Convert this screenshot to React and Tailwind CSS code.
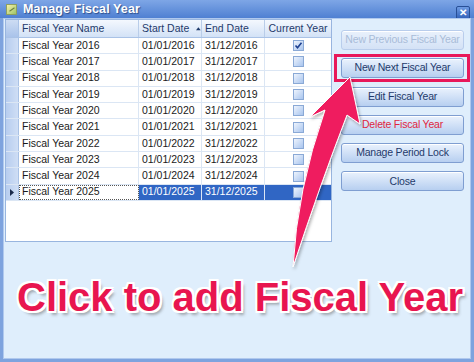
import React from "react";

const rows = [2016, 2017, 2018, 2019, 2020, 2021, 2022, 2023, 2024, 2025];

function Check({ checked }) {
  return (
    <div className="w-[11px] h-[11px] border border-[#8aa9d6] bg-gradient-to-br from-[#eef4fd] to-[#a9c5ee] flex items-center justify-center">
      {checked && (
        <svg width="9" height="9" viewBox="0 0 9 9">
          <path d="M1.5 4.5 L3.5 6.8 L7.5 1.8" stroke="#1d3f8f" strokeWidth="1.6" fill="none" />
        </svg>
      )}
    </div>
  );
}

function Btn({ children, variant }) {
  const txt =
    variant === "disabled"
      ? "text-[#a9bcd8]"
      : variant === "red"
      ? "text-[#e0263e]"
      : "text-[#1f3a6b]";
  const bg =
    variant === "disabled"
      ? "from-[#e9f1fc] to-[#d4e2f6] border-[#b9cdec]"
      : "from-[#eaf2fd] to-[#b7cff0] border-[#7f9ed1]";
  return (
    <div
      className={`h-[20px] w-[123px] rounded-[3px] border bg-gradient-to-b ${bg} ${txt} flex items-center justify-center text-[10.5px] whitespace-nowrap tracking-[-0.2px] shadow-[inset_0_1px_0_#fff]`}
    >
      {children}
    </div>
  );
}

export default function App() {
  return (
    <div className="w-[474px] h-[362px] relative overflow-hidden bg-[#7ea3de] px-[3px] pb-[3px] font-['Liberation_Sans',Arial,sans-serif]">
      {/* title bar */}
      <div className="h-[18px] -mx-[3px] bg-gradient-to-b from-[#7ea6e6] to-[#4f80d2] flex items-center pl-[6px] pr-[4px]">
        <div className="w-[11px] h-[11px] bg-gradient-to-br from-[#f8f2a8] to-[#9cc46a] border border-[#8ea060] flex items-center justify-center">
          <div className="w-[6px] h-[1px] bg-[#6c8040] rotate-[-35deg]" />
        </div>
        <div className="ml-[6px] text-white font-bold text-[12.5px] tracking-[0.1px] [text-shadow:1px_1px_1px_#2d4f8c]">
          Manage Fiscal Year
        </div>
        <div className="ml-auto mt-[8px] w-[14px] h-[14px] rounded-[2px] bg-gradient-to-b from-[#6f9be3] to-[#2f5fb7] border border-[#284f96] flex items-center justify-center text-white text-[10px] font-bold leading-none">
          ✕
        </div>
      </div>

      {/* body */}
      <div className="h-[341px] bg-[#dfeefc] border border-[#b0c9ee] relative">
        <div className="flex">
          {/* grid */}
          <div className="ml-[1px] w-[327px] h-[223px] bg-white border border-[#98b5df] text-[10.5px] text-[#1a1a1a] whitespace-nowrap">
            <div className="flex h-[18px] bg-gradient-to-b from-[#f4f8fe] to-[#d3e2f6] border-b border-[#a9c2e6] text-[#1f3a6b]">
              <div className="w-[13px] border-r border-[#a9c2e6] bg-gradient-to-b from-[#cddcf3] to-[#a9c3ea]" />
              <div className="w-[120px] border-r border-[#b9cde9] flex items-center pl-[3px]">Fiscal Year Name</div>
              <div className="w-[63px] border-r border-[#b9cde9] flex items-center pl-[3px]">
                Start Date
                <svg className="ml-[7px]" width="7" height="5" viewBox="0 0 7 5">
                  <path d="M0 5 L3.5 0.5 L7 5 Z" fill="#1f3a6b" />
                </svg>
              </div>
              <div className="w-[63px] border-r border-[#b9cde9] flex items-center pl-[3px]">End Date</div>
              <div className="flex-1 flex items-center justify-center">Current Year</div>
            </div>
            {rows.map((y, i) => {
              const sel = y === 2025;
              return (
                <div key={y} className="flex h-[16.3px] border-b border-[#dbe6f4]">
                  <div className="w-[13px] border-r border-[#a9c2e6] bg-gradient-to-r from-[#b7cdef] to-[#cfdef5] flex items-center justify-center">
                    {sel && (
                      <svg width="4" height="7" viewBox="0 0 4 7">
                        <path d="M0 0 L4 3.5 L0 7 Z" fill="#1a2a4a" />
                      </svg>
                    )}
                  </div>
                  <div
                    className={`w-[120px] border-r border-[#dbe6f4] flex items-center pl-[3px] ${
                      sel ? "outline outline-1 outline-dotted outline-[#555] -outline-offset-1" : ""
                    }`}
                  >
                    Fiscal Year {y}
                  </div>
                  <div className={`w-[63px] border-r border-[#dbe6f4] flex items-center pl-[3px] ${sel ? "bg-[#3066c4] text-white" : ""}`}>
                    01/01/{y}
                  </div>
                  <div className={`w-[63px] border-r border-[#dbe6f4] flex items-center pl-[3px] ${sel ? "bg-[#3066c4] text-white" : ""}`}>
                    31/12/{y}
                  </div>
                  <div className={`flex-1 flex items-center justify-center ${sel ? "bg-[#3066c4]" : ""}`}>
                    <Check checked={i === 0} />
                  </div>
                </div>
              );
            })}
          </div>

          {/* buttons */}
          <div className="ml-[9px] mt-[11px] flex flex-col gap-[8.3px]">
            <Btn variant="disabled">New Previous Fiscal Year</Btn>
            <div className="relative">
              <Btn>New Next Fiscal Year</Btn>
              <div className="absolute -left-[7px] -top-[4px] w-[136px] h-[28px] border-[3px] border-[#e8185a] pointer-events-none" />
            </div>
            <Btn>Edit Fiscal Year</Btn>
            <Btn variant="red">Delete Fiscal Year</Btn>
            <Btn>Manage Period Lock</Btn>
            <Btn>Close</Btn>
          </div>
        </div>

        {/* caption */}
        <div className="mt-[31px] ml-[13px] text-[40px] leading-[48px] font-bold text-[#e8154f] whitespace-nowrap [text-shadow:0_0_2px_#fff,0_0_2px_#fff,2px_0_0_#fff,-2px_0_0_#fff,0_2px_0_#fff,0_-2px_0_#fff,2px_2px_0_#fff,-2px_-2px_0_#fff,2px_-2px_0_#fff,-2px_2px_0_#fff,3px_4px_3px_rgba(80,80,80,0.45)]">
          Click to add Fiscal Year
        </div>
      </div>

      {/* arrow */}
      <svg className="absolute left-0 top-0 pointer-events-none" width="474" height="362" viewBox="0 0 474 362">
        <defs>
          <filter id="sh" x="-20%" y="-20%" width="140%" height="140%">
            <feDropShadow dx="1.5" dy="2" stdDeviation="1.5" floodColor="#000" floodOpacity="0.3" />
          </filter>
        </defs>
        <path
          d="M350 77 L360 124 L347 115 Q320 185 293 267 Q297 190 325 110 L310 117 Z"
          fill="#ef1c5e"
          stroke="#fff"
          strokeWidth="1"
          filter="url(#sh)"
        />
      </svg>
    </div>
  );
}
